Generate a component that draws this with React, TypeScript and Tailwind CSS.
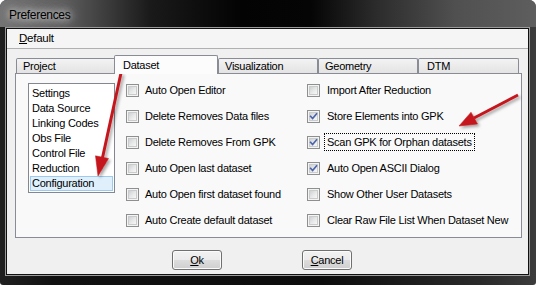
import React from "react";

const Check = ({ checked }: { checked?: boolean }) => (
  <span className="relative w-[13px] h-[13px] border border-[#8e8f8f] bg-[#f4f4f4] shrink-0 flex items-center justify-center">
    <span className="w-[9px] h-[9px] bg-[linear-gradient(135deg,#cfd1d4_0%,#e9e9e9_55%,#f7f7f7_100%)] border border-[#c9cbcd]" />
    {checked && (
      <svg className="absolute left-0 top-0" width="11" height="11" viewBox="0 0 11 11">
        <path d="M2.6 5.4 L4.6 7.6 L8.5 2.8" fill="none" stroke="#4a63ad" strokeWidth="1.6" strokeLinecap="square" />
      </svg>
    )}
  </span>
);

const Row = ({ label, checked, focus, gap = "gap-[6px]" }: { label: string; checked?: boolean; focus?: boolean; gap?: string }) => (
  <div className={`h-[26px] flex items-center ${focus ? "gap-[4px]" : gap}`}>
    <Check checked={checked} />
    {focus ? (
      <span className="border border-dotted border-black px-[2px] h-[18px] flex items-center whitespace-nowrap">{label}</span>
    ) : (
      <span className="whitespace-nowrap">{label}</span>
    )}
  </div>
);

const Tab = ({ label }: { label: string }) => (
  <div className="w-[100px] h-[15px] mt-[3px] border border-b-0 border-[#898c95] rounded-t-[2px] bg-[linear-gradient(to_bottom,#f3f3f3,#e3e3e3)] pl-[6px] flex items-center leading-[13px]">
    {label}
  </div>
);

export default function App() {
  const listItems = ["Settings", "Data Source", "Linking Codes", "Obs File", "Control File", "Reduction", "Configuration"];
  return (
    <div className="w-[536px] h-[285px] bg-white font-['Liberation_Sans',Arial,sans-serif] text-[11px] tracking-[-0.25px] text-black">
      <div className="relative w-full h-full rounded-t-[7px] rounded-b-[3px] overflow-hidden bg-[linear-gradient(to_right,#202020_0%,#111_10%,#0c0c0c_60%,#2a2a2a_90%,#3c3c3c_100%)] flex flex-col">
        {/* title bar */}
        <div className="h-[27px] shrink-0 flex items-center pl-[9px] bg-[linear-gradient(to_right,#737373_0%,#5d5d5d_12%,#1a1a1a_28%,#030303_45%,#050505_58%,#2b2b2b_70%,#505050_85%,#5e5e5e_100%)]">
          <span className="text-[12px] tracking-[-0.3px] pt-[2px] [text-shadow:0_0_6px_#d8d8d8,0_0_10px_#c0c0c0,0_0_14px_#b0b0b0]">Preferences</span>
        </div>
        {/* body */}
        <div className="flex-1 ml-[5px] mr-[6px] mb-[9px] border border-[#9a9a9a] flex flex-col">
          <div className="flex-1 border border-[#101010] bg-[#f0f0f0] flex flex-col">
            {/* menu */}
            <div className="h-[18px] bg-[#f5f5f5] border-b border-[#b0b0b0] box-content flex items-center pl-[12px] pt-[1px] text-[11.5px]">
              <span>
                <span className="underline underline-offset-[1px]">D</span>efault
              </span>
            </div>
            {/* tabs */}
            <div className="mt-[6px] ml-[9px] h-[18px] flex items-start">
              <Tab label="Project" />
              <div className="relative z-10 -ml-[2px] w-[104px] h-[19px] border border-b-0 border-[#898c95] rounded-t-[2px] bg-[#fcfcfc] pl-[8px] flex items-center leading-[13px]">
                Dataset
              </div>
              <Tab label="Visualization" />
              <Tab label="Geometry" />
              <div className="w-[101px] h-[15px] mt-[3px] border border-b-0 border-[#898c95] rounded-t-[2px] bg-[linear-gradient(to_bottom,#f3f3f3,#e3e3e3)] pl-[8px] flex items-center leading-[13px]">
                DTM
              </div>
            </div>
            {/* panel */}
            <div className="relative ml-[8px] w-[507px] h-[165px] border border-[#898c95] bg-[#f9f9f9] flex items-start leading-[13px]">
              <div className="ml-[12px] mt-[9px] w-[87px] h-[110px] border border-[#828790] bg-white pt-[2px] px-[1px] flex flex-col">
                {listItems.map((it, i) =>
                  i === listItems.length - 1 ? (
                    <div key={it} className="h-[15px] border border-[#9ccbef] bg-[#dff0fc] pl-[1px] flex items-center">
                      {it}
                    </div>
                  ) : (
                    <div key={it} className="h-[15px] pl-[2px] flex items-center">
                      {it}
                    </div>
                  )
                )}
              </div>
              <div className="ml-[11px] mt-[3px] w-[181px] flex flex-col">
                <Row label="Auto Open Editor" />
                <Row label="Delete Removes Data files" />
                <Row label="Delete Removes From GPK" />
                <Row label="Auto Open last dataset" />
                <Row label="Auto Open first dataset found" />
                <Row label="Auto Create default dataset" />
              </div>
              <div className="mt-[3px] flex flex-col tracking-[-0.25px]">
                <Row label="Import After Reduction" gap="gap-[7px]" />
                <Row label="Store Elements into GPK" checked gap="gap-[7px]" />
                <Row label="Scan GPK for Orphan datasets" checked focus />
                <Row label="Auto Open ASCII Dialog" checked gap="gap-[7px]" />
                <Row label="Show Other User Datasets" gap="gap-[7px]" />
                <Row label="Clear Raw File List When Dataset New" gap="gap-[7px]" />
              </div>
            </div>
            {/* buttons */}
            <div className="mt-[12px] flex">
              <button className="ml-[165px] w-[50px] h-[20px] border border-[#707070] rounded-[3px] bg-[linear-gradient(to_bottom,#f2f2f2_0%,#ebebeb_50%,#dddddd_50%,#cfcfcf_100%)] shadow-[inset_0_0_0_1px_#fbfbfb] flex items-center justify-center leading-[13px]">
                <span>
                  <span className="underline underline-offset-[1px]">O</span>k
                </span>
              </button>
              <button className="ml-[80px] w-[50px] h-[20px] border border-[#707070] rounded-[3px] bg-[linear-gradient(to_bottom,#f2f2f2_0%,#ebebeb_50%,#dddddd_50%,#cfcfcf_100%)] shadow-[inset_0_0_0_1px_#fbfbfb] flex items-center justify-center leading-[13px]">
                <span>
                  <span className="underline underline-offset-[1px]">C</span>ancel
                </span>
              </button>
            </div>
          </div>
        </div>
        {/* red arrows */}
        <svg className="absolute left-0 top-0 pointer-events-none" width="536" height="285" viewBox="0 0 536 285">
          <defs>
            <filter id="sh" x="-20%" y="-20%" width="140%" height="140%">
              <feDropShadow dx="2" dy="2" stdDeviation="1.5" floodColor="#000" floodOpacity="0.35" />
            </filter>
          </defs>
          <g filter="url(#sh)" fill="#c4161c" stroke="#c4161c">
            <line x1="121" y1="73" x2="102" y2="160" strokeWidth="3" />
            <polygon points="108.5,158.5 95.5,155.8 98,176" strokeWidth="0.5" />
            <line x1="518" y1="95" x2="474" y2="118" strokeWidth="3" />
            <polygon points="477.5,124 471,112.2 459,126" strokeWidth="0.5" />
          </g>
        </svg>
      </div>
    </div>
  );
}
